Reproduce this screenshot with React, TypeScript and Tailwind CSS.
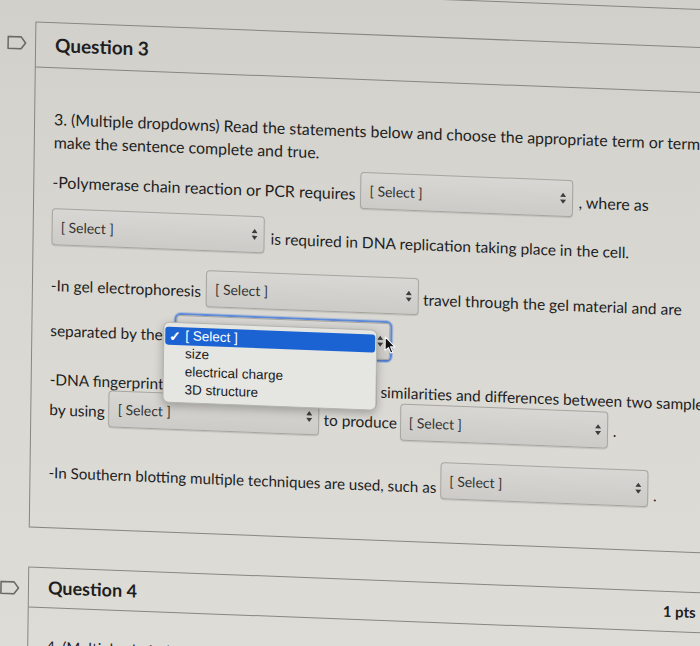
import React from "react";

function Arrows() {
  return (
    <svg width="6" height="11" viewBox="0 0 6 11" className="shrink-0">
      <path d="M3 0 L6 4.2 H0 Z" fill="#3d3d3d" />
      <path d="M0 6.8 H6 L3 11 Z" fill="#3d3d3d" />
    </svg>
  );
}

function SelectBox({ className = "" }: { className?: string }) {
  return (
    <div
      className={`flex h-[37px] shrink-0 items-center justify-between rounded-[4px] border border-[#a6a5a0] bg-linear-to-b from-[#d8d7d3] to-[#cccbc7] pl-[8px] pr-[6px] shadow-[0_1px_1px_rgba(0,0,0,0.12)] ${className}`}
    >
      <span className="text-[14px] text-[#333]">[ Select ]</span>
      <Arrows />
    </div>
  );
}

function Flag() {
  return (
    <svg width="20" height="14" viewBox="0 0 20 14">
      <path d="M1 1 H14 L18.5 7 L14 13 H1 Z" fill="none" stroke="#6a6a66" strokeWidth="1.6" strokeLinejoin="round" />
    </svg>
  );
}

function Cursor() {
  return (
    <svg width="12" height="18" viewBox="0 0 12 18">
      <path d="M1 1 L1 14.5 L4.3 11.4 L6.6 16.8 L8.7 15.9 L6.4 10.6 L10.8 10.6 Z" fill="#111" stroke="#fff" strokeWidth="1" strokeLinejoin="round" />
    </svg>
  );
}

export default function App() {
  return (
    <div className="relative h-[646px] w-[700px] overflow-hidden bg-linear-to-b from-[#d1d0cb] via-[#d9d8d3] to-[#dedcd7] font-['Lato',sans-serif] text-[#1e1e1e]">
      {/* the photo is taken at a slight angle, so the whole page is sheared */}
      <div className="-mt-[25px] w-[760px] origin-top-left skew-x-[-0.75deg] skew-y-[2.2deg]">
        {/* bottom edge of the previous question */}
        <div className="ml-[36px] h-[8px] border-b border-[#878681]" />

        {/* Question 3 */}
        <div className="relative mt-[37px] ml-[36px] w-[700px] border border-[#878681]">
          <div className="absolute -left-[29px] top-[14px]">
            <Flag />
          </div>
          <div className="flex h-[45px] items-center border-b border-[#878681] pl-[19px]">
            <h2 className="text-[19px] font-bold">Question 3</h2>
          </div>

          <div className="pl-[18px] pt-[39px] pb-[40px]">
            <p className="ml-[1px] whitespace-nowrap text-[15.9px] leading-[23px]">
              3. (Multiple dropdowns) Read the statements below and choose the appropriate term or terms
              <br />
              make the sentence complete and true.
            </p>

            <div className="mt-[14px] flex h-[30px] items-center whitespace-nowrap text-[16px]">
              <span>-Polymerase chain reaction or PCR requires</span>
              <SelectBox className="ml-[5px] mb-[7px] w-[213px]" />
              <span className="ml-[5px]">, where as</span>
            </div>

            <div className="mt-[19px] flex h-[30px] items-center whitespace-nowrap text-[15.5px]">
              <SelectBox className="mb-[10px] w-[213px]" />
              <span className="ml-[6px]">is required in DNA replication taking place in the cell.</span>
            </div>

            <div className="mt-[25px] flex h-[30px] items-center whitespace-nowrap text-[15.5px]">
              <span>-In gel electrophoresis</span>
              <SelectBox className="ml-[5px] mb-[8px] w-[213px]" />
              <span className="ml-[4px]">travel through the gel material and are</span>
            </div>

            <div className="relative mt-[15px] flex h-[30px] items-center whitespace-nowrap text-[15.4px]">
              <span>separated by the</span>
              <div className="ml-[12px] mb-[6px] rounded-[6px] border-2 border-[#5d89d9] shadow-[0_0_0_1px_rgba(93,137,217,0.35)]">
                <SelectBox className="w-[214px] border-[#9fb3d6]" />
              </div>

              {/* open dropdown list */}
              <div className="absolute left-[113px] top-[1px] z-10 w-[214px] rounded-[6px] border border-[#b4b4b0] bg-[#e5e5e2] pt-[4px] pb-[3px] font-['Liberation_Sans',Arial,sans-serif] text-[13.5px] text-[#1a1a1a] shadow-[0_3px_10px_rgba(0,0,0,0.28)]">
                <div className="relative mx-[1px] flex h-[18px] items-center rounded-[3px] bg-[#1b63d3] pl-[20px] text-white">
                  <span className="absolute left-[4px] text-[14px] font-bold">✓</span>
                  <span>[ Select ]</span>
                </div>
                <div className="flex h-[18px] items-center pl-[21px]">size</div>
                <div className="flex h-[18px] items-center pl-[21px]">electrical charge</div>
                <div className="flex h-[18px] items-center pl-[21px]">3D structure</div>
              </div>
              <div className="absolute left-[334px] top-[7px] z-20">
                <Cursor />
              </div>
            </div>

            <div className="mt-[19px] flex h-[30px] items-center whitespace-nowrap text-[15.4px]">
              <span>-DNA fingerprint</span>
              <SelectBox className="ml-[4px] mb-[8px] w-[209px]" />
              <span className="ml-[4px]">similarities and differences between two samples</span>
            </div>

            <div className="flex h-[30px] items-center whitespace-nowrap text-[15.4px]">
              <span>by using</span>
              <SelectBox className="ml-[4px] mb-[7px] w-[211px]" />
              <span className="ml-[4px]">to produce</span>
              <SelectBox className="ml-[3px] mb-[4px] w-[208px]" />
              <span className="ml-[5px]">.</span>
            </div>

            <div className="mt-[32px] flex h-[30px] items-center whitespace-nowrap text-[15.15px]">
              <span>-In Southern blotting multiple techniques are used, such as</span>
              <SelectBox className="ml-[4px] mb-[14px] w-[208px]" />
              <span className="ml-[5px]">.</span>
            </div>
          </div>
        </div>

        {/* Question 4 */}
        <div className="relative mt-[39px] ml-[36px] w-[700px] border border-[#878681]">
          <div className="absolute -left-[29px] top-[14px]">
            <Flag />
          </div>
          <div className="flex h-[40px] items-center justify-between border-b border-[#878681] pl-[19px] pr-[31px]">
            <h2 className="text-[18px] font-bold">Question 4</h2>
            <span className="text-[15px] font-bold">1 pts</span>
          </div>
          <div className="pl-[18px] pt-[27px] pb-[40px] text-[15px] leading-[23px]">
            <p>4. (Multiple choice) Read the statement below and choose the correct answer.</p>
          </div>
        </div>
      </div>
    </div>
  );
}
